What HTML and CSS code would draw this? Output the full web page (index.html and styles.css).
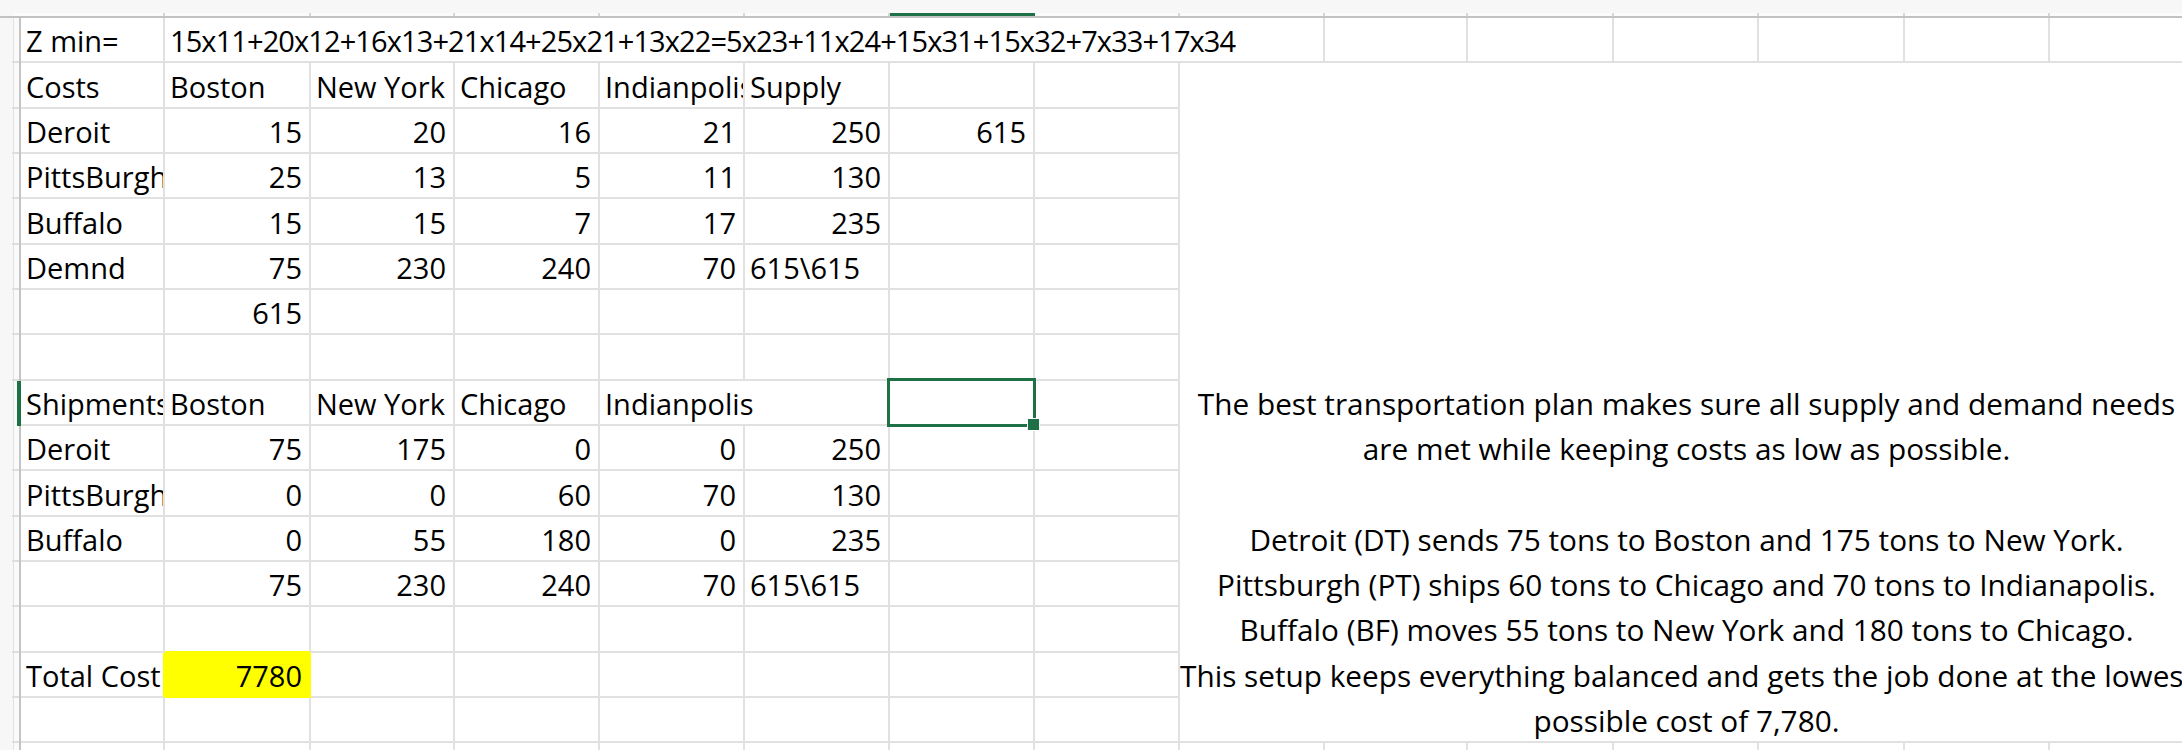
FILE: index.html
```html
<!DOCTYPE html>
<html>
<head>
<meta charset="utf-8">
<link rel="stylesheet" href="styles.css">
</head>
<body>
<table class="sheet">
<colgroup>
<col class="w-rh"><col class="w144"><col class="w146"><col class="w144"><col class="w145"><col class="w145"><col class="w145"><col class="w145"><col class="w145"><col class="w145"><col class="w143"><col class="w146"><col class="w145"><col class="w146"><col class="w145"><col class="w145">
</colgroup>
<tr class="hdr">
<th class="corner"></th><th></th><th></th><th></th><th></th><th></th><th></th><th class="act"></th><th></th><th></th><th></th><th></th><th></th><th></th><th></th><th></th>
</tr>
<tr>
<td class="rh"></td><td>Z min=</td><td class="formula" colspan="8">15x11+20x12+16x13+21x14+25x21+13x22=5x23+11x24+15x31+15x32+7x33+17x34</td><td></td><td></td><td></td><td></td><td></td><td></td>
</tr>
<tr>
<td class="rh"></td><td>Costs</td><td>Boston</td><td>New York</td><td>Chicago</td><td>Indianpolis</td><td>Supply</td><td></td><td></td>
<td class="note" rowspan="15" colspan="7"><div class="note-text">The best transportation plan makes sure all supply and demand needs<br>are met while keeping costs as low as possible.<br>&nbsp;<br>Detroit (DT) sends 75 tons to Boston and 175 tons to New York.<br>Pittsburgh (PT) ships 60 tons to Chicago and 70 tons to Indianapolis.<br>Buffalo (BF) moves 55 tons to New York and 180 tons to Chicago.<br>This setup keeps everything balanced and gets the job done at the lowest<br>possible cost of 7,780.</div></td>
</tr>
<tr>
<td class="rh"></td><td>Deroit</td><td class="n">15</td><td class="n">20</td><td class="n">16</td><td class="n">21</td><td class="n">250</td><td class="n">615</td><td></td>
</tr>
<tr>
<td class="rh"></td><td>PittsBurgh</td><td class="n">25</td><td class="n">13</td><td class="n">5</td><td class="n">11</td><td class="n">130</td><td></td><td></td>
</tr>
<tr>
<td class="rh"></td><td>Buffalo</td><td class="n">15</td><td class="n">15</td><td class="n">7</td><td class="n">17</td><td class="n">235</td><td></td><td></td>
</tr>
<tr>
<td class="rh"></td><td>Demnd</td><td class="n">75</td><td class="n">230</td><td class="n">240</td><td class="n">70</td><td>615\615</td><td></td><td></td>
</tr>
<tr>
<td class="rh"></td><td></td><td class="n">615</td><td></td><td></td><td></td><td></td><td></td><td></td>
</tr>
<tr>
<td class="rh"></td><td></td><td></td><td></td><td></td><td></td><td></td><td></td><td></td>
</tr>
<tr>
<td class="rh rh-act"></td><td>Shipments</td><td>Boston</td><td>New York</td><td>Chicago</td><td colspan="2">Indianpolis</td><td class="sel"></td><td></td>
</tr>
<tr>
<td class="rh"></td><td>Deroit</td><td class="n">75</td><td class="n">175</td><td class="n">0</td><td class="n">0</td><td class="n">250</td><td></td><td></td>
</tr>
<tr>
<td class="rh"></td><td>PittsBurgh</td><td class="n">0</td><td class="n">0</td><td class="n">60</td><td class="n">70</td><td class="n">130</td><td></td><td></td>
</tr>
<tr>
<td class="rh"></td><td>Buffalo</td><td class="n">0</td><td class="n">55</td><td class="n">180</td><td class="n">0</td><td class="n">235</td><td></td><td></td>
</tr>
<tr>
<td class="rh"></td><td></td><td class="n">75</td><td class="n">230</td><td class="n">240</td><td class="n">70</td><td>615\615</td><td></td><td></td>
</tr>
<tr>
<td class="rh"></td><td></td><td class="above-hl"></td><td></td><td></td><td></td><td></td><td></td><td></td>
</tr>
<tr>
<td class="rh"></td><td class="left-hl">Total Cost</td><td class="n hl">7780</td><td></td><td></td><td></td><td></td><td></td><td></td>
</tr>
<tr>
<td class="rh"></td><td></td><td></td><td></td><td></td><td></td><td></td><td></td><td></td>
</tr>
<tr>
<td class="rh"></td><td></td><td></td><td></td><td></td><td></td><td></td><td></td><td></td><td></td><td></td><td></td><td></td><td></td><td></td>
</tr>
</table>
</body>
</html>
```
FILE: styles.css
```css
* { box-sizing: border-box; }
html, body { margin: 0; padding: 0; background: #fff; }
body {
  width: 2182px;
  height: 750px;
  overflow: hidden;
  font-family: "Open Sans", "Liberation Sans", sans-serif;
  font-size: 29px;
  color: #000;
}
.sheet {
  border-collapse: separate;
  border-spacing: 0;
  table-layout: fixed;
  width: 2195px;
}
.w-rh { width: 21px; }
.w143 { width: 143px; }
.w144 { width: 144px; }
.w145 { width: 145px; }
.w146 { width: 146px; }

.hdr th {
  height: 18px;
  padding: 0;
  border-bottom: 2px solid #c2c2c2;
  background:
    linear-gradient(#f7f7f7, #f7f7f7) top left / 100% 13px no-repeat,
    linear-gradient(#d6d6d6, #d6d6d6) right bottom / 2px 5px no-repeat,
    #fbfbfb;
}
.hdr th.corner {
  background:
    linear-gradient(#f7f7f7, #f7f7f7) top left / 100% 13px no-repeat,
    linear-gradient(#f7f7f7, #f7f7f7) top left / 13px 100% no-repeat,
    #fbfbfb;
}
.hdr th.act {
  background:
    linear-gradient(#f7f7f7, #f7f7f7) top left / 100% 13px no-repeat,
    linear-gradient(#1e7145, #1e7145) left bottom / 100% 4px no-repeat,
    #fbfbfb;
}

.sheet td {
  height: 45.33px;
  padding: 0 7px 6px 5px;
  border-right: 2px solid #e1e1e1;
  border-bottom: 2px solid #e1e1e1;
  vertical-align: bottom;
  white-space: nowrap;
  overflow: hidden;
  line-height: 28px;
}
.sheet td.n { text-align: right; }
.sheet td.formula { letter-spacing: -0.9px; }

.sheet td.rh {
  padding: 0;
  border-bottom: 0;
  border-right: 2px solid #c4c4c4;
  background:
    linear-gradient(#dedede, #dedede) right bottom / 7px 2px no-repeat,
    linear-gradient(to right, #f7f7f7 0 13px, #e2e2e2 13px 14px, #fafafa 14px);
}
.sheet td.rh-act {
  border-right-color: #1e7145;
  background:
    linear-gradient(#1e7145, #1e7145) right top / 2px 100% no-repeat,
    linear-gradient(to right, #f7f7f7 0 13px, #e2e2e2 13px 14px, #fafafa 14px);
}

.sheet td.hl {
  background: #ffff00;
  border-right-color: #ffff00;
  border-bottom-color: #ffff00;
}
.sheet td.left-hl { border-right-color: #ffff00; }
.sheet td.above-hl { border-bottom-color: #ffff00; }

.sheet td.sel {
  position: relative;
  overflow: visible;
}
.sheet td.sel::after {
  content: "";
  position: absolute;
  left: -3px;
  top: -3px;
  right: -3px;
  bottom: -3px;
  border: 3px solid #1e7145;
}
.sheet td.sel::before {
  content: "";
  position: absolute;
  right: -6px;
  bottom: -6px;
  width: 11px;
  height: 11px;
  background: #1e7145;
  box-shadow: 0 0 0 1px #fff;
  z-index: 1;
}

.sheet td.note {
  padding: 0;
  text-align: center;
  vertical-align: bottom;
  font-size: 29.75px;
  line-height: 45.33px;
}
.note-text {
  margin-bottom: -2px;
}
```
